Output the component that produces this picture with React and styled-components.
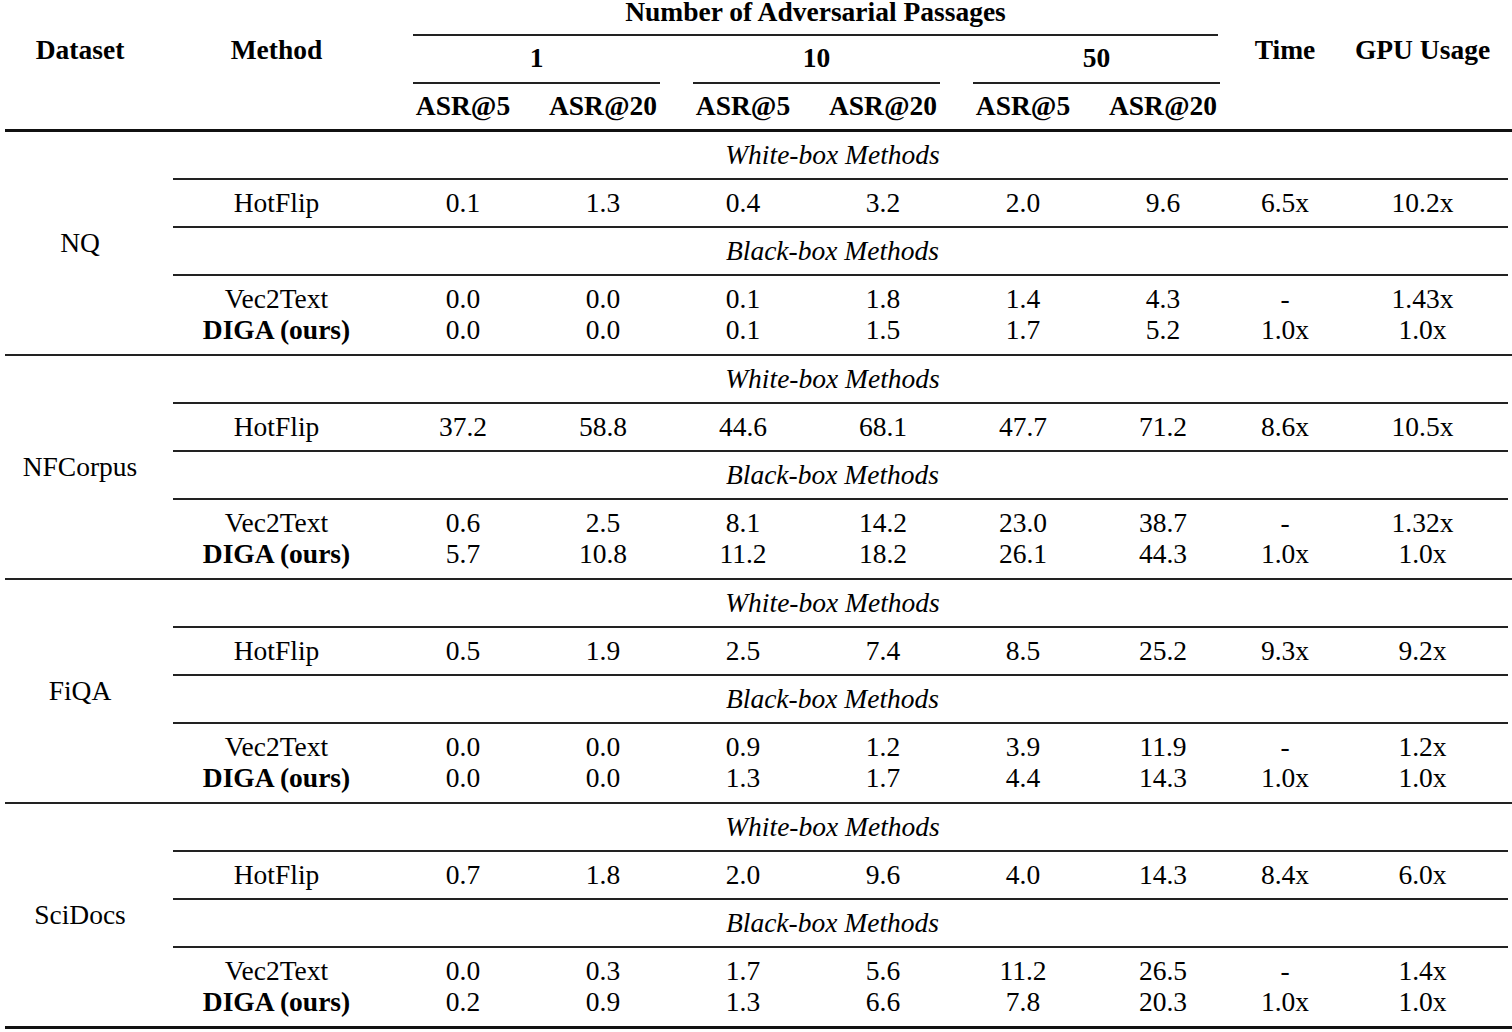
import React from "react";
import styled, { createGlobalStyle } from "styled-components";

const GlobalStyle = createGlobalStyle`
  html, body {
    margin: 0;
    padding: 0;
    background: #fff;
  }
  body {
    font-family: "Liberation Serif", "Times New Roman", serif;
    color: #000;
  }
`;

const COLS = "168px 220px repeat(6, 140px) 104px 171px";

const Page = styled.div`
  width: 1512px;
  padding-left: 5px;
  box-sizing: border-box;
  font-size: 27.5px;
`;

const HeaderGrid = styled.div`
  display: grid;
  grid-template-columns: ${COLS};
  grid-template-rows: 34px 2px 46px 2px 45px;
`;

const HeadLabel = styled.div`
  grid-column: ${(p) => p.col};
  grid-row: 1 / 6;
  padding-top: 38px;
  padding-right: ${(p) => p.pr || 0}px;
  line-height: 24px;
  font-weight: bold;
  text-align: center;
  white-space: nowrap;
`;

const Title = styled.div`
  grid-column: 3 / 9;
  grid-row: 1;
  padding-top: 1px;
  line-height: 21px;
  font-weight: bold;
  text-align: center;
  padding-left: 20px;
  padding-right: 15px;
  white-space: nowrap;
`;

const MidRule = styled.div`
  grid-column: ${(p) => p.col};
  grid-row: ${(p) => p.row};
  margin: 0 ${(p) => p.mr}px 0 ${(p) => p.ml}px;
  background: #222;
`;

const GroupLabel = styled.div`
  grid-column: ${(p) => p.col};
  grid-row: 3;
  line-height: 44px;
  font-weight: bold;
  text-align: center;
  padding-left: 7px;
`;

const SubLabel = styled.div`
  grid-column: ${(p) => p.col};
  grid-row: 5;
  line-height: 44px;
  font-weight: bold;
  text-align: center;
  white-space: nowrap;
`;

const Rule = styled.div`
  height: ${(p) => p.h || 2}px;
  background: ${(p) => (p.h === 3 ? "#111" : "#222")};
`;

const BlockGrid = styled.div`
  display: grid;
  grid-template-columns: ${COLS};
  grid-template-rows: 46px 2px 46px 2px 46px 2px 78px;
`;

const DatasetCell = styled.div`
  grid-column: 1;
  grid-row: 1 / -1;
  align-self: center;
  padding-right: 18px;
  text-align: center;
  line-height: 30px;
`;

const SectionLabel = styled.div`
  grid-column: 2 / -1;
  grid-row: ${(p) => p.row};
  line-height: 46px;
  font-style: italic;
  text-align: center;
  padding-right: 16px;
`;

const InnerRule = styled.div`
  grid-column: 2 / -1;
  grid-row: ${(p) => p.row};
  background: #222;
`;

const Cell = styled.div`
  grid-row: ${(p) => p.row};
  line-height: ${(p) => (p.pair ? "31px" : "46px")};
  padding-top: ${(p) => (p.pair ? 7 : 0)}px;
  padding-right: ${(p) => p.pr || 0}px;
  text-align: center;
  white-space: nowrap;
`;

const Line = styled.div`
  font-weight: ${(p) => (p.bold ? "bold" : "normal")};
`;

const blocks = [
  {
    name: "NQ",
    hot: ["0.1", "1.3", "0.4", "3.2", "2.0", "9.6", "6.5x", "10.2x"],
    vec: ["0.0", "0.0", "0.1", "1.8", "1.4", "4.3", "-", "1.43x"],
    diga: ["0.0", "0.0", "0.1", "1.5", "1.7", "5.2", "1.0x", "1.0x"],
  },
  {
    name: "NFCorpus",
    hot: ["37.2", "58.8", "44.6", "68.1", "47.7", "71.2", "8.6x", "10.5x"],
    vec: ["0.6", "2.5", "8.1", "14.2", "23.0", "38.7", "-", "1.32x"],
    diga: ["5.7", "10.8", "11.2", "18.2", "26.1", "44.3", "1.0x", "1.0x"],
  },
  {
    name: "FiQA",
    hot: ["0.5", "1.9", "2.5", "7.4", "8.5", "25.2", "9.3x", "9.2x"],
    vec: ["0.0", "0.0", "0.9", "1.2", "3.9", "11.9", "-", "1.2x"],
    diga: ["0.0", "0.0", "1.3", "1.7", "4.4", "14.3", "1.0x", "1.0x"],
  },
  {
    name: "SciDocs",
    hot: ["0.7", "1.8", "2.0", "9.6", "4.0", "14.3", "8.4x", "6.0x"],
    vec: ["0.0", "0.3", "1.7", "5.6", "11.2", "26.5", "-", "1.4x"],
    diga: ["0.2", "0.9", "1.3", "6.6", "7.8", "20.3", "1.0x", "1.0x"],
  },
];

const Header = () => (
  <HeaderGrid>
    <HeadLabel col={1} pr={18}>Dataset</HeadLabel>
    <HeadLabel col={2} pr={13}>Method</HeadLabel>
    <Title>Number of Adversarial Passages</Title>
    <MidRule col="3 / 9" row={2} ml={20} mr={15} />
    <GroupLabel col="3 / 5">1</GroupLabel>
    <GroupLabel col="5 / 7">10</GroupLabel>
    <GroupLabel col="7 / 9">50</GroupLabel>
    <MidRule col="3 / 5" row={4} ml={20} mr={13} />
    <MidRule col="5 / 7" row={4} ml={20} mr={13} />
    <MidRule col="7 / 9" row={4} ml={20} mr={13} />
    {[3, 4, 5, 6, 7, 8].map((c) => (
      <SubLabel key={c} col={c}>
        {c % 2 ? "ASR@5" : "ASR@20"}
      </SubLabel>
    ))}
    <HeadLabel col={9}>Time</HeadLabel>
    <HeadLabel col={10}>GPU Usage</HeadLabel>
  </HeaderGrid>
);

const Block = ({ item }) => (
  <BlockGrid>
    <DatasetCell>{item.name}</DatasetCell>
    <SectionLabel row={1}>White-box Methods</SectionLabel>
    <InnerRule row={2} />
    <Cell row={3} pr={13}>HotFlip</Cell>
    {item.hot.map((v, i) => (
      <Cell key={i} row={3}>{v}</Cell>
    ))}
    <InnerRule row={4} />
    <SectionLabel row={5}>Black-box Methods</SectionLabel>
    <InnerRule row={6} />
    <Cell row={7} pair pr={13}>
      <Line>Vec2Text</Line>
      <Line bold>DIGA (ours)</Line>
    </Cell>
    {item.vec.map((v, i) => (
      <Cell key={i} row={7} pair>
        <Line>{v}</Line>
        <Line>{item.diga[i]}</Line>
      </Cell>
    ))}
  </BlockGrid>
);

export default function App() {
  return (
    <Page>
      <GlobalStyle />
      <Header />
      <Rule h={3} />
      {blocks.map((b, i) => (
        <React.Fragment key={b.name}>
          <Block item={b} />
          <Rule h={i === blocks.length - 1 ? 3 : 2} />
        </React.Fragment>
      ))}
    </Page>
  );
}
